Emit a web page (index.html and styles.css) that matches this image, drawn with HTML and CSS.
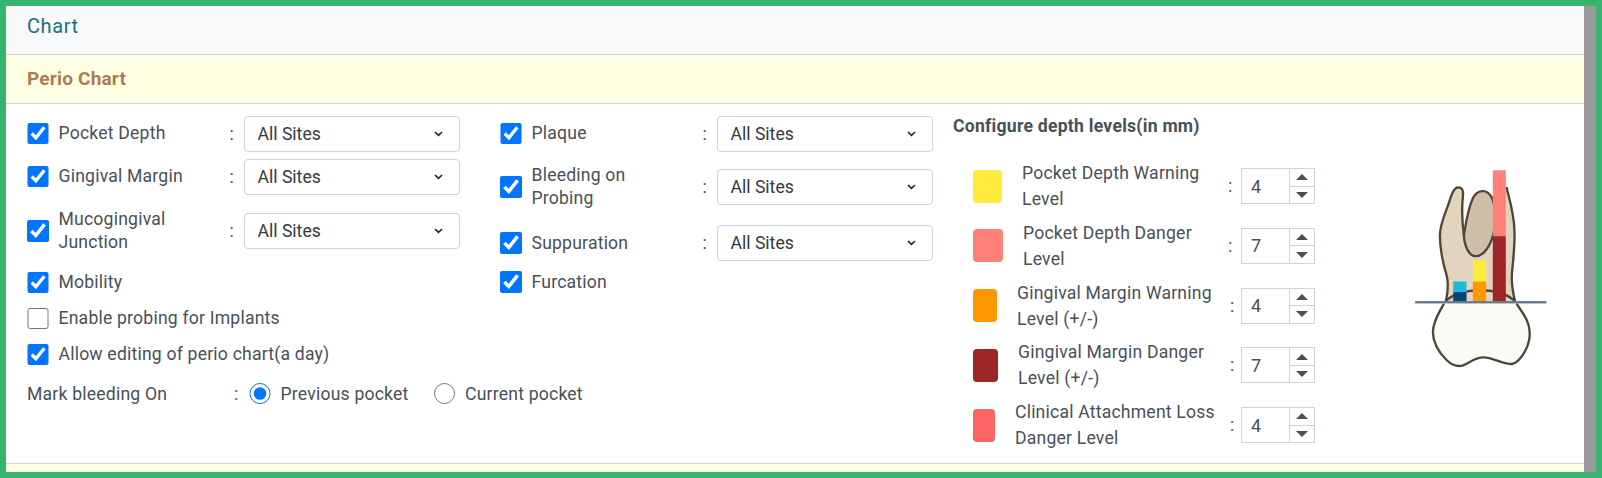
FILE: index.html
```html
<!DOCTYPE html>
<html lang="en">
<head>
<meta charset="utf-8">
<title>Perio Chart</title>
<link rel="stylesheet" href="styles.css">
</head>
<body>
<div class="frame">
  <main class="main">
    <header class="top">Chart</header>
    <div class="band"><h2>Perio Chart</h2></div>
    <section class="content">
      <div class="col-a">
        <div class="row h43"><input type="checkbox" checked><label class="lab">Pocket Depth</label><span class="colon">:</span><select><option>All Sites</option></select></div>
        <div class="row h43"><input type="checkbox" checked><label class="lab">Gingival Margin</label><span class="colon">:</span><select><option>All Sites</option></select></div>
        <div class="row h66"><input type="checkbox" checked><label class="lab">Mucogingival Junction</label><span class="colon">:</span><select><option>All Sites</option></select></div>
        <div class="row h37"><input type="checkbox" checked><label class="free">Mobility</label></div>
        <div class="row h35"><input type="checkbox"><label class="free">Enable probing for Implants</label></div>
        <div class="row h37"><input type="checkbox" checked><label class="free">Allow editing of perio chart(a day)</label></div>
        <div class="row h41">
          <span class="mark">Mark bleeding On</span><span class="colon">:</span>
          <input class="radio" type="radio" name="mark" checked><label class="radio-lab first">Previous pocket</label>
          <input class="radio" type="radio" name="mark"><label class="radio-lab">Current pocket</label>
        </div>
      </div>
      <div class="col-b">
        <div class="row h43"><input type="checkbox" checked><label class="lab">Plaque</label><span class="colon">:</span><select><option>All Sites</option></select></div>
        <div class="row h64"><input type="checkbox" checked><label class="lab">Bleeding on Probing</label><span class="colon">:</span><select><option>All Sites</option></select></div>
        <div class="row h48"><input type="checkbox" checked><label class="lab">Suppuration</label><span class="colon">:</span><select><option>All Sites</option></select></div>
        <div class="row h30"><input type="checkbox" checked><label class="free">Furcation</label></div>
      </div>
      <div class="col-c">
        <h3>Configure depth levels(in mm)</h3>
        <div class="levels">
          <div class="level">
            <span class="sw sw1"></span><span class="lvl-lab">Pocket Depth Warning Level</span><span class="lvl-colon">:</span>
            <div class="spin"><input type="text" value="4"><div class="btns"><button class="up"></button><button class="down"></button></div></div>
          </div>
          <div class="level">
            <span class="sw sw2"></span><span class="lvl-lab">Pocket Depth Danger Level</span><span class="lvl-colon">:</span>
            <div class="spin"><input type="text" value="7"><div class="btns"><button class="up"></button><button class="down"></button></div></div>
          </div>
          <div class="level">
            <span class="sw sw3"></span><span class="lvl-lab">Gingival Margin Warning Level (+/-)</span><span class="lvl-colon">:</span>
            <div class="spin"><input type="text" value="4"><div class="btns"><button class="up"></button><button class="down"></button></div></div>
          </div>
          <div class="level">
            <span class="sw sw4"></span><span class="lvl-lab">Gingival Margin Danger Level (+/-)</span><span class="lvl-colon">:</span>
            <div class="spin"><input type="text" value="7"><div class="btns"><button class="up"></button><button class="down"></button></div></div>
          </div>
          <div class="level">
            <span class="sw sw5"></span><span class="lvl-lab">Clinical Attachment Loss Danger Level</span><span class="lvl-colon">:</span>
            <div class="spin"><input type="text" value="4"><div class="btns"><button class="up"></button><button class="down"></button></div></div>
          </div>
        </div>
      </div>
      <svg class="tooth" viewBox="220 80 410 610" width="137" height="203" aria-hidden="true">
        <path d="M318 484C324 455 327 430 320 405C308 365 300 330 300 285C300 250 318 215 328 185C336 160 342 141 355 141C368 141 371 152 369 170C366 200 366 240 372 285L500 140C508 175 522 215 524 270C526 325 518 370 516 410C515 440 520 460 526 484Z" fill="#e2d4bf"/>
        <path d="M318 484C324 455 327 430 320 405C308 365 300 330 300 285C300 250 318 215 328 185C336 160 342 141 355 141C368 141 371 152 369 170C366 200 366 240 372 285M500 140C508 175 522 215 524 270C526 325 518 370 516 410C515 440 520 460 526 484" fill="none" stroke="#4f4539" stroke-width="7" stroke-linejoin="round"/>
        <path d="M372 285C378 250 384 205 400 172C412 150 440 142 456 172C468 200 470 250 460 285C448 325 428 348 408 348C388 348 374 320 372 285Z" fill="#cfbfa8" stroke="#4f4539" stroke-width="7"/>
        <path d="M312 490C300 515 280 540 279 575C279 610 300 640 320 660C335 675 352 680 368 677C390 668 405 652 430 652C458 652 490 672 516 672C538 668 570 625 570 580C570 540 545 515 530 490Z" fill="#fbfbf6"/>
        <path d="M316 484C360 440 480 438 526 484" fill="none" stroke="#4f4539" stroke-width="7"/>
        <path d="M312 490C300 515 280 540 279 575C279 610 300 640 320 660C335 675 352 680 368 677C390 668 405 652 430 652C458 652 490 672 516 672C538 668 570 625 570 580C570 540 545 515 530 490" fill="none" stroke="#4f4539" stroke-width="7" stroke-linejoin="round"/>
        <rect x="340" y="424" width="40" height="32" fill="#1cbbd8"/>
        <rect x="340" y="456" width="40" height="28" fill="#054474"/>
        <rect x="399" y="361" width="40" height="63" fill="#ffeb3b"/>
        <rect x="399" y="424" width="40" height="60" fill="#ff9800"/>
        <rect x="459" y="90" width="39" height="198" fill="#ff8078"/>
        <rect x="459" y="288" width="39" height="196" fill="#9c2527"/>
        <rect x="225" y="483" width="395" height="6" fill="#64788a"/>
        <rect x="225" y="489" width="395" height="2" fill="#a3b0bb"/>
      </svg>
    </section>
    <div class="band foot"></div>
  </main>
  <div class="scroll"></div>
</div>
</body>
</html>
```

FILE: styles.css
```css
* { box-sizing: border-box; }
html, body { margin: 0; height: 100%; }
body {
  background: #36b36f;
  padding: 6px;
  font-family: Roboto, "Liberation Sans", sans-serif;
  font-size: 17.6px;
  color: #495057;
  overflow: hidden;
}
.frame { display: flex; height: 466px; overflow: hidden; }
.main { flex: 1; min-width: 0; background: #fff; overflow: hidden; }
.scroll { width: 12px; background: #999; flex: none; }

.top {
  height: 49px;
  padding: 6px 21px 0;
  background: #f8f9fb;
  border-bottom: 1px solid #d3d3d3;
  color: #1b6f80;
  font-size: 20px;
  line-height: 28px;
  letter-spacing: .6px;
}
.band {
  height: 49px;
  background: #ffffe4;
  border-bottom: 1px solid #d3d3d3;
  padding: 0 21px;
}
.band h2 {
  margin: 0;
  font-size: 19px;
  line-height: 48px;
  font-weight: 700;
  letter-spacing: .2px;
  color: #ab7d50;
}
.foot { border-top: 1px solid #d3d3d3; border-bottom: 0; height: 12px; }

.content { display: flex; height: 359px; padding: 8px 0 0 21px; align-items: flex-start; }
.col-a { width: 473px; flex: none; }
.col-b { width: 433px; flex: none; }
.col-c { width: 362px; flex: none; margin-left: 20px; }

.row { display: flex; align-items: center; }
.h30 { height: 30px; }
.h35 { height: 35px; }
.h37 { height: 37px; }
.h41 { height: 41px; }
.h43 { height: 43px; }
.h48 { height: 48px; }
.h64 { height: 64px; }
.h66 { height: 66px; }

input[type="checkbox"] {
  width: 21.5px;
  height: 21.5px;
  margin: 0 10px 0 0;
  flex: none;
  accent-color: #0075ff;
}
.lab { width: 139px; margin-right: 32px; line-height: 23px; letter-spacing: .2px; flex: none; }
.free { line-height: 23px; letter-spacing: .2px; white-space: nowrap; }
.colon { width: 14px; flex: none; }
.row select {
  appearance: none;
  width: 216px;
  height: 36px;
  flex: none;
  border: 1px solid #ced4da;
  border-radius: 4px;
  background: #fff url("data:image/svg+xml,%3Csvg xmlns='http://www.w3.org/2000/svg' width='9' height='6'%3E%3Cpath d='M1 1l3.5 3.4L8 1' fill='none' stroke='%23212529' stroke-width='1.7'/%3E%3C/svg%3E") no-repeat right 16px center;
  color: #343a40;
  font: 17.6px Roboto, "Liberation Sans", sans-serif;
  padding: 0 13px;
}
.mark { width: 207px; letter-spacing: .2px; flex: none; }
.row .colon + .radio { margin-left: 1px; }
.radio { width: 21.5px; height: 21.5px; margin: 0 10px 0 0; flex: none; accent-color: #0075ff; }
.radio-lab { letter-spacing: .2px; white-space: nowrap; }
.radio-lab.first { width: 153px; flex: none; }

.col-c h3 {
  margin: 0 0 20px;
  font-size: 17.6px;
  line-height: 28px;
  font-weight: 700;
  letter-spacing: .25px;
  color: #495057;
}
.levels { display: flex; flex-direction: column; gap: 7.75px; padding-left: 20px; }
.level { display: flex; align-items: center; height: 52px; }
.sw { flex: none; height: 33px; border-radius: 4px; margin-right: 20px; }
.sw1 { width: 29px; background: #ffeb3b; }
.sw2 { width: 30px; background: #ff8078; }
.sw3 { width: 24px; background: #ff9800; }
.sw4 { width: 25px; background: #9c2527; }
.sw5 { width: 22px; background: #ff6464; }
.lvl-lab { flex: 1; min-width: 0; line-height: 26px; letter-spacing: .2px; padding-right: 4px; }
.lvl-colon { width: 13px; flex: none; }
.level:nth-child(n+3) .lvl-colon { text-indent: 2px; }
.spin { display: flex; width: 74px; height: 36px; flex: none; border: 1px solid #ced4da; background: #fff; }
.spin input {
  width: 47px;
  border: 0;
  padding: 0 0 0 9px;
  font: 18px Roboto, "Liberation Sans", sans-serif;
  color: #495057;
  background: transparent;
  outline: 0;
}
.btns { flex: 1; display: flex; flex-direction: column; border-left: 1px solid #ced4da; }
.btns button {
  flex: 1;
  border: 0;
  padding: 0;
  background: #fff;
  position: relative;
}
.btns .up { border-bottom: 1px solid #ced4da; }
.btns button::after {
  content: "";
  position: absolute;
  left: 50%;
  top: 50%;
  margin: -3px 0 0 -6px;
  border-left: 6px solid transparent;
  border-right: 6px solid transparent;
}
.btns .up::after { border-bottom: 6px solid #495057; }
.btns .down::after { border-top: 6px solid #495057; }

.tooth { flex: none; margin: 55px 0 0 98px; }
```
